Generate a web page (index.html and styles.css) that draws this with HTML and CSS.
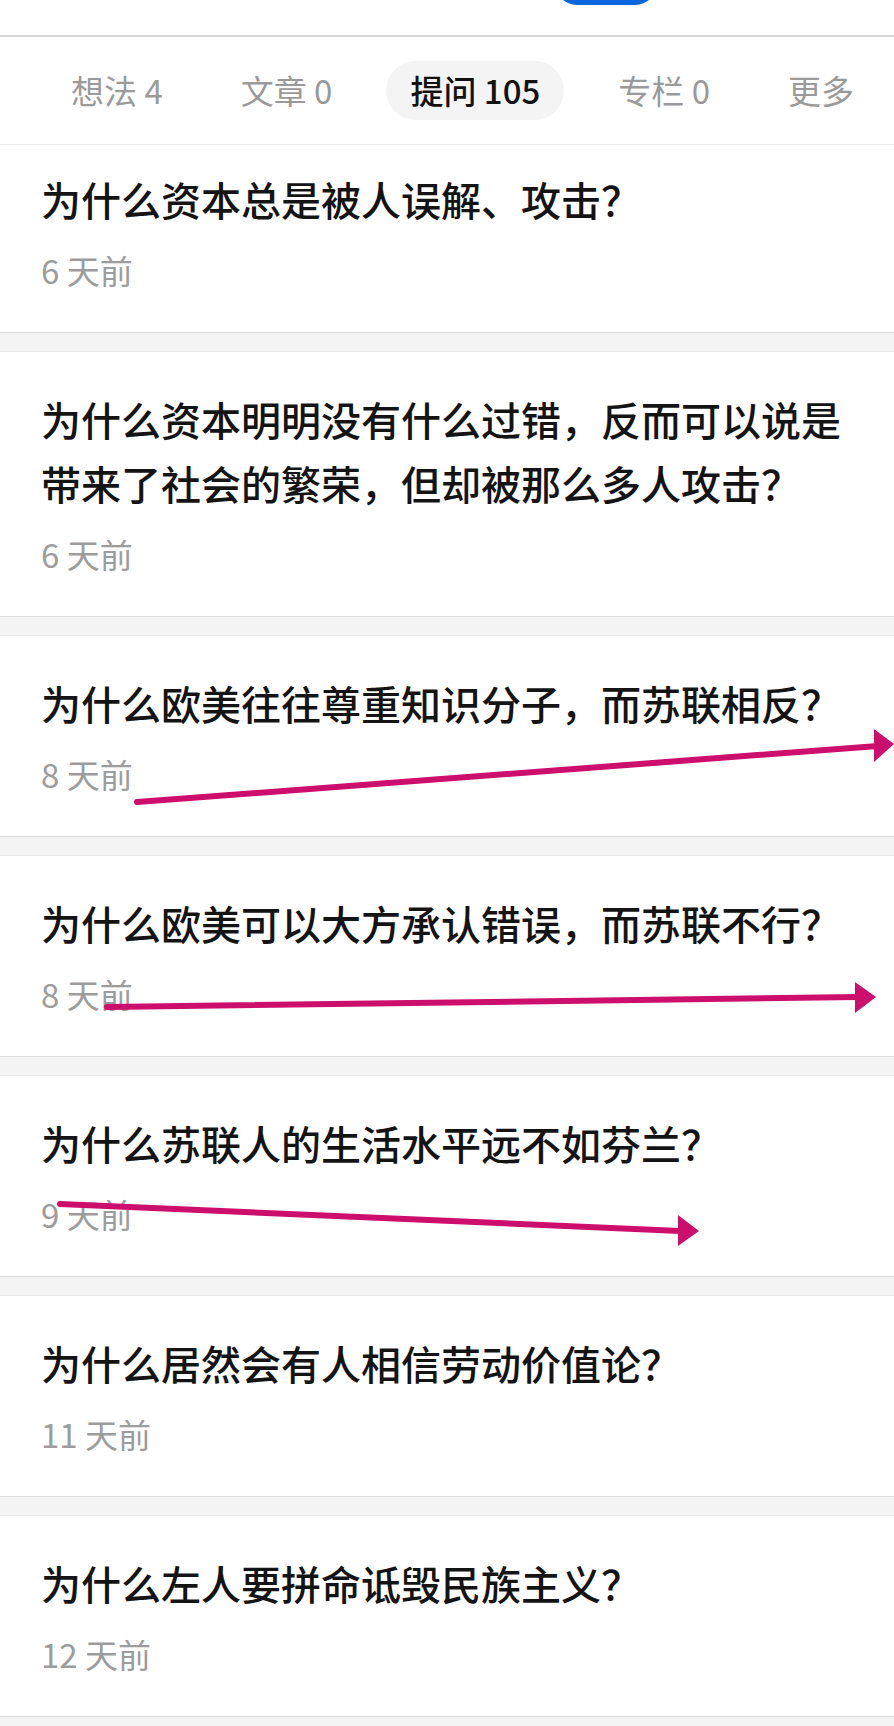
FILE: index.html
```html
<!DOCTYPE html>
<html lang="zh-CN">
<head>
  <meta charset="UTF-8" />
  <meta name="viewport" content="width=device-width, initial-scale=1.0"/>
  <title>提问</title>
  <link rel="stylesheet" href="styles.css">
</head>
<body>
  <div class="topbar">
    <button class="follow-btn"></button>
  </div>

  <nav class="tabs">
    <span class="tab">想法 4</span>
    <span class="tab">文章 0</span>
    <span class="tab active">提问 105</span>
    <span class="tab">专栏 0</span>
    <span class="tab">更多</span>
  </nav>

  <ul class="question-list">
    <li class="question">
      <p class="title">为什么资本总是被人误解、攻击？</p>
      <p class="time">6 天前</p>
    </li>
    <li class="question">
      <p class="title">为什么资本明明没有什么过错，反而可以说是带来了社会的繁荣，但却被那么多人攻击？</p>
      <p class="time">6 天前</p>
    </li>
    <li class="question">
      <p class="title">为什么欧美往往尊重知识分子，而苏联相反？</p>
      <p class="time">8 天前</p>
    </li>
    <li class="question">
      <p class="title">为什么欧美可以大方承认错误，而苏联不行？</p>
      <p class="time">8 天前</p>
    </li>
    <li class="question">
      <p class="title">为什么苏联人的生活水平远不如芬兰？</p>
      <p class="time">9 天前</p>
    </li>
    <li class="question">
      <p class="title">为什么居然会有人相信劳动价值论？</p>
      <p class="time">11 天前</p>
    </li>
    <li class="question">
      <p class="title">为什么左人要拼命诋毁民族主义？</p>
      <p class="time">12 天前</p>
    </li>
  </ul>

  <!-- hand-drawn marks on top of the list -->
  <svg class="marks" width="894" height="1726" viewBox="0 0 894 1726">
    <g stroke="#cc0f6c" stroke-width="6" stroke-linecap="round" fill="none">
      <line x1="137" y1="802" x2="878" y2="746" />
      <line x1="107" y1="1007" x2="858" y2="997" />
      <line x1="60" y1="1204" x2="680" y2="1231" />
    </g>
    <g fill="#cc0f6c">
      <polygon points="894,744 874,729 874,762" />
      <polygon points="876,997 855,982 855,1013" />
      <polygon points="699,1231 678,1215 678,1246" />
    </g>
  </svg>
</body>
</html>
```

FILE: styles.css
```css
* {
  box-sizing: border-box;
  margin: 0;
  padding: 0;
}

body {
  background: #f4f4f4;
  font-family: "Noto Sans CJK SC", "Noto Sans", sans-serif;
  position: relative;
  overflow: hidden;
}

.topbar {
  background: #fff;
  height: 37px;
  padding-left: 555px;
  border-bottom: 2px solid #d8d8d8;
  overflow: hidden;
}

.follow-btn {
  display: block;
  width: 102px;
  height: 44px;
  margin-top: -39px;
  border: none;
  border-radius: 22px;
  background: #0a66dc;
}

.tabs {
  position: relative;
  z-index: 1;
  display: flex;
  align-items: center;
  gap: 30px;
  height: 108px;
  padding-left: 47px;
  background: #fff;
  border-bottom: 1px solid #ececec;
}

.tab {
  height: 59px;
  line-height: 59px;
  padding: 0 24px;
  border-radius: 30px;
  font-size: 33px;
  color: #9a9a9a;
  white-space: nowrap;
}

.tab.active {
  background: #f4f4f4;
  color: #111;
  font-weight: 500;
}

.question-list {
  list-style: none;
  margin-top: -14px;
}

.question {
  background: #fff;
  border-top: 1px solid #e8e8e8;
  border-bottom: 1px solid #dcdcdc;
  padding: 35px 41px 39px;
  margin-bottom: 18px;
}

.title {
  font-size: 40px;
  line-height: 64px;
  font-weight: 500;
  color: #141414;
}

.time {
  margin-top: 16px;
  font-size: 33px;
  line-height: 46px;
  color: #9c9c9c;
}

.marks {
  position: absolute;
  top: 0;
  left: 0;
  pointer-events: none;
}
```
